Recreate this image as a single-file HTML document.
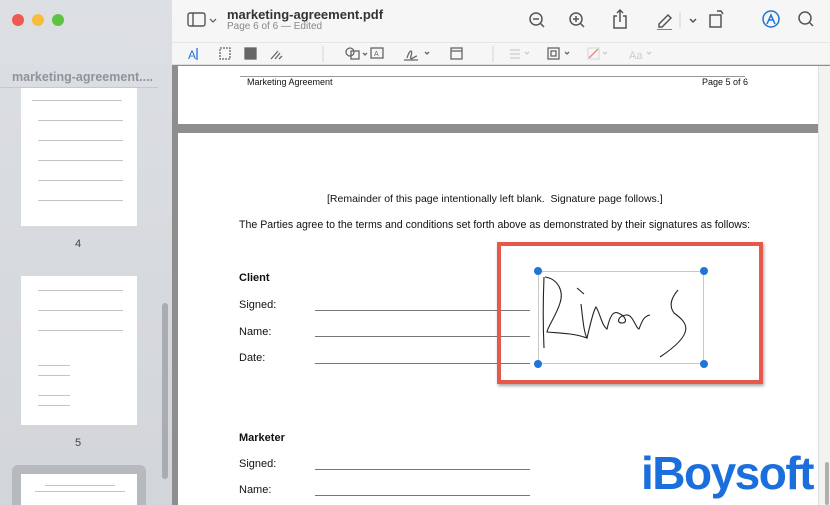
<!DOCTYPE html>
<html><head><meta charset="utf-8"><style>
*{margin:0;padding:0;box-sizing:border-box}
html,body{width:830px;height:505px;overflow:hidden}
body{position:relative;background:#8e8e8e;font-family:"Liberation Sans",Arial,sans-serif}
.a{position:absolute}
.t{position:absolute;white-space:nowrap;color:#111}
.ln{position:absolute;height:1px;background:#777;width:215px;left:315px}
.thumb{position:absolute;background:#fff;left:21px;width:116px;overflow:hidden}
.tl{position:absolute;height:1px;background:#c4c4c4}
.dot{position:absolute;width:8px;height:8px;border-radius:50%;background:#1f74d6}
</style></head><body>
<div class="a" style="left:0;top:0;width:172px;height:505px;background:linear-gradient(#dcdfe3,#d2d5d9);overflow:hidden">
<div class="a" style="left:12px;top:14px;width:12px;height:12px;border-radius:50%;background:#ee5a52"></div>
<div class="a" style="left:32px;top:14px;width:12px;height:12px;border-radius:50%;background:#f5bd3a"></div>
<div class="a" style="left:52px;top:14px;width:12px;height:12px;border-radius:50%;background:#5fc245"></div>
<div class="t" style="left:12px;top:70px;font-size:12.5px;font-weight:bold;color:#8f949a">marketing-agreement....</div>
<div class="a" style="left:0;top:87px;width:158px;height:1px;background:#c5c8cc"></div>
<div class="thumb" style="top:88px;height:138px"></div>
<div class="t" style="left:75px;top:238px;font-size:11px;color:#444">4</div>
<div class="thumb" style="top:276px;height:149px"></div>
<div class="t" style="left:75px;top:437px;font-size:11px;color:#444">5</div>
<div class="a" style="left:12px;top:465px;width:134px;height:50px;border-radius:6px;background:#b6babf"></div>
<div class="thumb" style="top:474px;height:40px"></div>
<div class="a" style="left:162px;top:303px;width:6px;height:176px;border-radius:3px;background:#a9acb0"></div>
<div class="tl" style="left:32px;top:100px;width:90px"></div><div class="tl" style="left:38px;top:120px;width:85px"></div><div class="tl" style="left:38px;top:140px;width:85px"></div><div class="tl" style="left:38px;top:160px;width:85px"></div><div class="tl" style="left:38px;top:180px;width:85px"></div><div class="tl" style="left:38px;top:200px;width:85px"></div>
<div class="tl" style="left:38px;top:290px;width:85px"></div><div class="tl" style="left:38px;top:310px;width:85px"></div><div class="tl" style="left:38px;top:330px;width:85px"></div><div class="tl" style="left:38px;top:365px;width:32px"></div><div class="tl" style="left:38px;top:375px;width:32px"></div><div class="tl" style="left:38px;top:395px;width:32px"></div><div class="tl" style="left:38px;top:405px;width:32px"></div>
<div class="tl" style="left:45px;top:485px;width:70px"></div><div class="tl" style="left:35px;top:491px;width:90px"></div>
</div>
<div class="a" style="left:172px;top:0;width:658px;height:65px;background:#f6f6f6;border-bottom:1px solid #dedede"></div>
<div class="a" style="left:172px;top:42px;width:658px;height:1px;background:#e6e6e6"></div>
<svg class="a" style="left:186px;top:10px" width="40" height="20"><rect x="2" y="3" width="17" height="13" rx="2" fill="none" stroke="#555" stroke-width="1.4"/><line x1="7" y1="3" x2="7" y2="16" stroke="#555" stroke-width="1.4"/><path d="M24 9l3 3 3-3" fill="none" stroke="#666" stroke-width="1.3"/></svg>
<div class="t" style="left:227px;top:7px;font-size:13px;font-weight:bold;color:#333">marketing-agreement.pdf</div>
<div class="t" style="left:227px;top:21px;font-size:10px;color:#888">Page 6 of 6 — Edited</div>
<svg class="a" style="left:520px;top:8px" width="310" height="22" fill="none" stroke="#555" stroke-width="1.5">
<circle cx="16" cy="11" r="6"/><line x1="20" y1="15" x2="24" y2="19"/><line x1="13" y1="11" x2="19" y2="11"/>
<circle cx="56" cy="11" r="6"/><line x1="60" y1="15" x2="64" y2="19"/><line x1="53" y1="11" x2="59" y2="11"/><line x1="56" y1="8" x2="56" y2="14"/>
<path d="M97 8h-3v12h12v-12h-3M100 2v12M97 5l3-3 3 3"/>
<path d="M139 16l9-9 3 3-9 9h-3z"/><line x1="137" y1="22" x2="152" y2="22"/>
<line x1="160" y1="4" x2="160" y2="20" stroke="#ddd"/><path d="M170 11l3 3 3-3"/>
<rect x="190" y="7" width="11" height="12"/><path d="M197 3h4l2 3"/>
<circle cx="251" cy="11" r="8" stroke="#1f74d6"/><path d="M247 16l4-9 4 9M249 12h4" stroke="#1f74d6"/>
<circle cx="285" cy="10" r="6"/><line x1="289" y1="14" x2="293" y2="18"/>
</svg>
<svg class="a" style="left:185px;top:44px" width="580" height="20" fill="none" stroke="#666" stroke-width="1.3">
<text x="3" y="15" font-size="12" fill="#1f74d6" stroke="none" font-family="Liberation Sans">A</text><line x1="12" y1="4" x2="12" y2="16" stroke="#1f74d6"/>
<rect x="35" y="4" width="10" height="11" stroke-dasharray="2 1"/>
<rect x="60" y="4" width="11" height="11" fill="#666"/>
<path d="M86 15l7-8M90 15l5-6M94 15l3-3"/>
<line x1="138" y1="2" x2="138" y2="18" stroke="#ddd"/>
<circle cx="165" cy="8" r="4"/><rect x="166" y="7" width="8" height="8"/><path d="M178 9l2 2 2-2"/>
<rect x="186" y="4" width="12" height="10"/><text x="189" y="12" font-size="7" fill="#666" stroke="none">A</text>
<path d="M222 14c3-10 6-8 4-2s4 0 6 0M219 16h14"/><path d="M240 8l2 2 2-2"/>
<rect x="266" y="4" width="11" height="11"/><line x1="266" y1="7" x2="277" y2="7"/>
<line x1="308" y1="2" x2="308" y2="18" stroke="#ddd"/>
<path d="M325 6h10M325 10h10M325 14h10M340 8l2 2 2-2" stroke="#ccc"/>
<rect x="363" y="4" width="11" height="11"/><rect x="366" y="7" width="5" height="5"/><path d="M380 8l2 2 2-2"/>
<rect x="403" y="4" width="11" height="11" stroke="#ddd"/><line x1="404" y1="14" x2="413" y2="5" stroke="#e87"/><path d="M418 8l2 2 2-2" stroke="#ccc"/>
<text x="444" y="15" font-size="11" fill="#ccc" stroke="none">Aa</text><path d="M462 8l2 2 2-2" stroke="#ccc"/>
</svg>
<div class="a" style="left:178px;top:66px;width:640px;height:58px;background:#fff"></div>
<div class="a" style="left:178px;top:133px;width:640px;height:372px;background:#fff"></div>
<div class="a" style="left:818px;top:66px;width:12px;height:439px;background:#f2f2f2;border-left:1px solid #e0e0e0"></div>
<div class="a" style="left:825px;top:462px;width:4px;height:43px;background:#b0b0b0;border-radius:2px"></div>
<div class="a" style="left:240px;top:76px;width:505px;height:1px;background:#999"></div>
<div class="t" style="left:247px;top:77px;font-size:9px">Marketing Agreement</div>
<div class="t" style="left:702px;top:77px;font-size:9px">Page 5 of 6</div>
<div class="t" style="left:327px;top:193px;font-size:10.5px">[Remainder of this page intentionally left blank.&nbsp; Signature page follows.]</div>
<div class="t" style="left:239px;top:219px;font-size:10.6px">The Parties agree to the terms and conditions set forth above as demonstrated by their signatures as follows:</div>
<div class="t" style="left:239px;top:272px;font-size:11px;font-weight:bold">Client</div>
<div class="t" style="left:239px;top:299px;font-size:11px">Signed:</div>
<div class="t" style="left:239px;top:326px;font-size:11px">Name:</div>
<div class="t" style="left:239px;top:352px;font-size:11px">Date:</div>
<div class="ln" style="top:310px"></div><div class="ln" style="top:336px"></div><div class="ln" style="top:363px"></div>
<div class="t" style="left:239px;top:432px;font-size:11px;font-weight:bold">Marketer</div>
<div class="t" style="left:239px;top:458px;font-size:11px">Signed:</div>
<div class="t" style="left:239px;top:484px;font-size:11px">Name:</div>
<div class="ln" style="top:469px"></div><div class="ln" style="top:495px"></div>
<div class="a" style="left:497px;top:242px;width:266px;height:142px;border:4px solid #e5584a;box-shadow:1px 2px 3px rgba(0,0,0,.35)"></div>
<div class="a" style="left:538px;top:271px;width:166px;height:93px;border:1px solid #c8c8c8"></div>
<div class="dot" style="left:534px;top:267px"></div><div class="dot" style="left:700px;top:267px"></div>
<div class="dot" style="left:534px;top:360px"></div><div class="dot" style="left:700px;top:360px"></div>
<svg class="a" style="left:538px;top:271px" width="166" height="93" fill="none" stroke="#222" stroke-width="1.1">
<path d="M6 6 C5 30 5 55 6 77"/>
<path d="M7 6 C20 8 26 20 22 32 C18 45 10 55 9 61 C20 62 35 62 49 67"/>
<path d="M39 17 L46 23"/>
<path d="M43 33 C45 50 46 62 49 67 C52 55 55 40 58 36 C62 42 64 55 69 58 C72 45 75 40 80 42 C88 45 90 52 84 52 C78 52 80 45 88 44 C95 43 98 58 101 58 C104 50 106 45 112 44"/>
<path d="M140 19 C134 26 130 34 136 42 C150 52 158 62 122 86"/>
</svg>
<div class="t" style="left:641px;top:446px;font-size:46px;font-weight:bold;color:#1a6fdc;letter-spacing:-1.5px">iBoysoft</div>
</body></html>
